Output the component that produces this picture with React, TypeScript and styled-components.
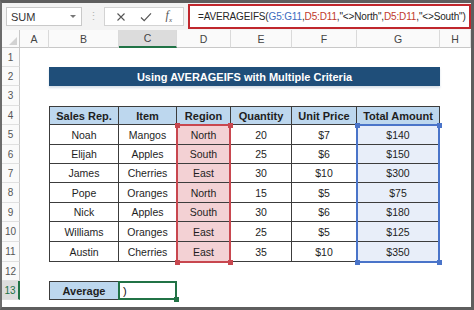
import React from "react";
import styled, { createGlobalStyle } from "styled-components";

const GlobalStyle = createGlobalStyle`
  html, body {
    margin: 0;
    padding: 0;
    background: #fff;
  }
  body {
    font-family: "Liberation Sans", Arial, sans-serif;
  }
`;

const Frame = styled.div`
  width: 474px;
  height: 310px;
  box-sizing: border-box;
  border-top: 3px solid #5e5e5e;
  border-left: 2px solid #6c6c6c;
  border-right: 3px solid #5e5e5e;
  border-bottom: 3px solid #5e5e5e;
  display: flex;
  flex-direction: column;
  overflow: hidden;
  background: #fff;
`;

/* ---------- formula bar ---------- */

const FormulaBar = styled.div`
  height: 27px;
  display: flex;
  align-items: center;
  padding-left: 4px;
  background: #f3f3f3;
`;

const NameBox = styled.div`
  width: 76px;
  height: 19px;
  box-sizing: border-box;
  border: 1px solid #c9c9c9;
  background: #fff;
  display: flex;
  align-items: center;
  justify-content: space-between;
  padding: 0 5px 0 4px;
  font-size: 11px;
  color: #333;
`;

const Caret = styled.span`
  width: 0;
  height: 0;
  border-left: 3px solid transparent;
  border-right: 3px solid transparent;
  border-top: 3px solid #777;
`;

const Dots = styled.div`
  width: 22px;
  text-align: center;
  color: #b5b5b5;
  font-size: 11px;
`;

const FnBox = styled.div`
  width: 80px;
  height: 19px;
  box-sizing: border-box;
  border: 1px solid #d3d3d3;
  background: #fff;
  display: flex;
  align-items: center;
  justify-content: space-around;
  padding: 0 4px;
`;

const Fx = styled.span`
  font-family: "Liberation Serif", "Times New Roman", serif;
  font-style: italic;
  font-size: 12px;
  color: #555;
  sub {
    font-size: 7px;
  }
`;

const FormulaBox = styled.div`
  flex: 1;
  margin-left: 4px;
  height: 25px;
  box-sizing: border-box;
  border: 2px solid #c0272d;
  background: #fff;
  display: flex;
  align-items: center;
  padding-left: 8px;
  font-size: 10px;
  letter-spacing: -0.15px;
  color: #262626;
  white-space: nowrap;
`;

const Ref = styled.span<{ $c: string }>`
  color: ${({ $c }) => $c};
`;

/* ---------- sheet ---------- */

const Sheet = styled.div`
  flex: 1;
  display: grid;
  grid-template-columns: 18px 29px 70px 58px 54px 61px 65px 83px 1fr;
  grid-template-rows: 18px 19px 19px 20px 19px 20px 19px 19px 20px 19px 20px 20px 19px 19px 1fr;
  background: #fff;
`;

const Corner = styled.div`
  grid-row: 1;
  grid-column: 1;
  background: #fafafa;
  border-bottom: 1px solid #c8c8c8;
  border-right: 1px solid #c8c8c8;
  display: flex;
  align-items: flex-end;
  justify-content: flex-end;
  padding: 0 2px 2px 0;
  box-sizing: border-box;
  &::after {
    content: "";
    width: 0;
    height: 0;
    border-left: 8px solid transparent;
    border-bottom: 8px solid #d2d2d2;
  }
`;

const ColHead = styled.div<{ $col: number; $active?: boolean }>`
  grid-row: 1;
  grid-column: ${({ $col }) => $col + 1};
  box-sizing: border-box;
  background: ${({ $active }) => ($active ? "#dcdcdc" : "#fafafa")};
  border-right: 1px solid #dadada;
  border-bottom: ${({ $active }) => ($active ? "2px solid #217346" : "1px solid #c8c8c8")};
  display: flex;
  align-items: center;
  justify-content: center;
  font-size: 10.5px;
  color: #444;
`;

const RowHead = styled.div<{ $row: number; $active?: boolean }>`
  grid-row: ${({ $row }) => $row + 1};
  grid-column: 1;
  box-sizing: border-box;
  background: ${({ $active }) => ($active ? "#dcdcdc" : "#fafafa")};
  border-bottom: 1px solid #e0e0e0;
  border-right: ${({ $active }) => ($active ? "2px solid #217346" : "1px solid #c8c8c8")};
  display: flex;
  align-items: center;
  justify-content: center;
  font-size: 10px;
  color: ${({ $active }) => ($active ? "#217346" : "#555")};
`;

const Title = styled.div`
  grid-row: 3;
  grid-column: 3 / 9;
  background: #1f4e79;
  color: #fff;
  font-weight: 700;
  font-size: 11px;
  display: flex;
  align-items: center;
  justify-content: center;
  box-shadow: 0 2px 2px rgba(31, 78, 121, 0.18);
`;

const TCell = styled.div<{
  $row: number;
  $col: number;
  $head?: boolean;
  $fill?: string;
  $left?: boolean;
  $top?: boolean;
}>`
  grid-row: ${({ $row }) => $row + 1};
  grid-column: ${({ $col }) => $col + 1};
  box-sizing: border-box;
  background: ${({ $fill }) => $fill ?? "#fff"};
  border-right: 1px solid #3c3c3c;
  border-bottom: 1px solid #3c3c3c;
  border-left: ${({ $left }) => ($left ? "1px solid #3c3c3c" : "none")};
  border-top: ${({ $top }) => ($top ? "1.5px solid #3c3c3c" : "none")};
  display: flex;
  align-items: center;
  justify-content: center;
  font-size: ${({ $head }) => ($head ? "11px" : "10.5px")};
  font-weight: ${({ $head }) => ($head ? 700 : 400)};
  color: #1e1e1e;
  white-space: nowrap;
`;

const Range = styled.div<{ $col: number; $color: string }>`
  grid-row: 6 / 13;
  grid-column: ${({ $col }) => $col + 1};
  position: relative;
  margin: -1px 0 -1px -1px;
  border: 2px solid ${({ $color }) => $color};
  pointer-events: none;
`;

const Handle = styled.span<{ $color: string; $x: "l" | "r"; $y: "t" | "b" }>`
  position: absolute;
  width: 5px;
  height: 5px;
  background: ${({ $color }) => $color};
  ${({ $x }) => ($x === "l" ? "left: -3.5px;" : "right: -3.5px;")}
  ${({ $y }) => ($y === "t" ? "top: -3.5px;" : "bottom: -3.5px;")}
`;

const Active = styled.div`
  grid-row: 14;
  grid-column: 4;
  position: relative;
  margin-left: -1px;
  border: 2px solid #217346;
  background: #fff;
  display: flex;
  align-items: center;
  padding-left: 3px;
  font-size: 11px;
  color: #111;
`;

const Corners = ({ color }: { color: string }) => (
  <>
    <Handle $color={color} $x="l" $y="t" />
    <Handle $color={color} $x="r" $y="t" />
    <Handle $color={color} $x="l" $y="b" />
    <Handle $color={color} $x="r" $y="b" />
  </>
);

const cols = ["A", "B", "C", "D", "E", "F", "G", "H"];
const headers = ["Sales Rep.", "Item", "Region", "Quantity", "Unit Price", "Total Amount"];
const data: (string | number)[][] = [
  ["Noah", "Mangos", "North", 20, "$7", "$140"],
  ["Elijah", "Apples", "South", 25, "$6", "$150"],
  ["James", "Cherries", "East", 30, "$10", "$300"],
  ["Pope", "Oranges", "North", 15, "$5", "$75"],
  ["Nick", "Apples", "South", 30, "$6", "$180"],
  ["Williams", "Oranges", "East", 25, "$5", "$125"],
  ["Austin", "Cherries", "East", 35, "$10", "$350"],
];

const fillFor = (c: number) => (c === 2 ? "#f3d1d4" : c === 5 ? "#e8eef9" : "#fff");

export default function App() {
  return (
    <>
      <GlobalStyle />
      <Frame>
        <FormulaBar>
          <NameBox>
            SUM
            <Caret />
          </NameBox>
          <Dots>⋮</Dots>
          <FnBox>
            <svg width="10" height="10" viewBox="0 0 10 10">
              <path d="M1.5 1.5 L8.5 8.5 M8.5 1.5 L1.5 8.5" stroke="#555" strokeWidth="1.1" fill="none" />
            </svg>
            <svg width="12" height="10" viewBox="0 0 12 10">
              <path d="M1 5.5 L4.2 8.6 L11 1.4" stroke="#555" strokeWidth="1.2" fill="none" />
            </svg>
            <Fx>
              f<sub>x</sub>
            </Fx>
          </FnBox>
          <FormulaBox>
            =AVERAGEIFS(<Ref $c="#3d6cc0">G5:G11</Ref>,<Ref $c="#c0392b">D5:D11</Ref>,"&lt;&gt;North",
            <Ref $c="#c0392b">D5:D11</Ref>,"&lt;&gt;South")
          </FormulaBox>
        </FormulaBar>

        <Sheet>
          <Corner />
          {cols.map((c, i) => (
            <ColHead key={c} $col={i + 1} $active={c === "C"}>
              {c}
            </ColHead>
          ))}
          {Array.from({ length: 13 }, (_, i) => (
            <RowHead key={i} $row={i + 1} $active={i === 12}>
              {i + 1}
            </RowHead>
          ))}

          <Title>Using AVERAGEIFS with Multiple Criteria</Title>

          {headers.map((h, c) => (
            <TCell key={h} $row={4} $col={c + 2} $head $top $left={c === 0} $fill="#bdd7ee">
              {h}
            </TCell>
          ))}
          {data.map((r, ri) =>
            r.map((v, c) => (
              <TCell key={`${ri}-${c}`} $row={ri + 5} $col={c + 2} $left={c === 0} $fill={fillFor(c)}>
                {v}
              </TCell>
            ))
          )}

          <Range $col={4} $color="#c8474f">
            <Corners color="#c8474f" />
          </Range>
          <Range $col={7} $color="#4a74c9">
            <Corners color="#4a74c9" />
          </Range>

          <TCell $row={13} $col={2} $head $top $left $fill="#bdd7ee">
            Average
          </TCell>
          <Active>
            )
            <Handle $color="#217346" $x="r" $y="b" />
          </Active>
        </Sheet>
      </Frame>
    </>
  );
}
